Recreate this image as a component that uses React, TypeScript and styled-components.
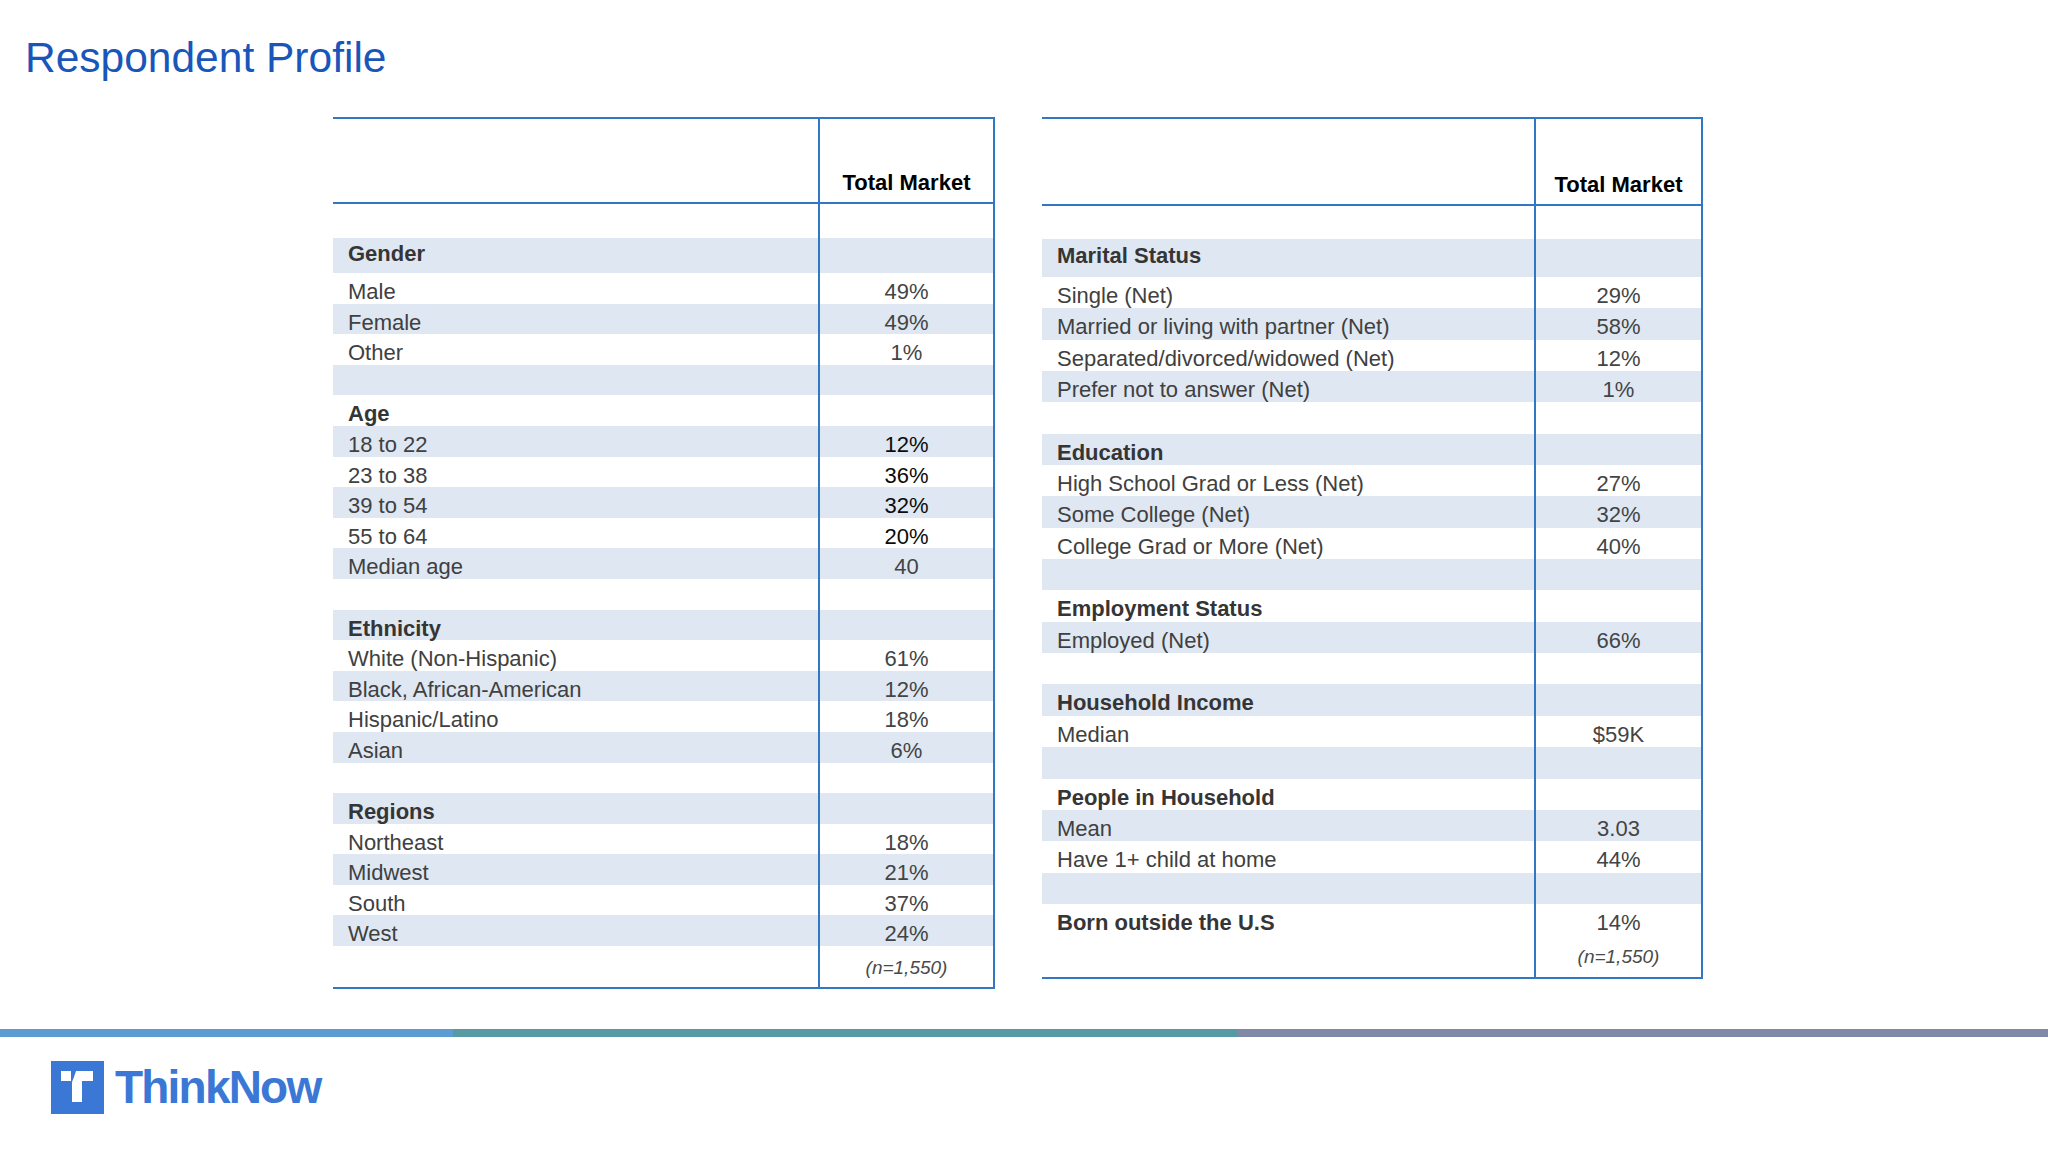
import React from 'react';
import styled, { createGlobalStyle } from 'styled-components';

const LINE = '#3177c4';
const SHADE = '#dee7f2';

const GlobalStyle = createGlobalStyle`
  html, body { margin: 0; padding: 0; background: #ffffff; }
  body { font-family: "Liberation Sans", Arial, Helvetica, sans-serif; }
  * { box-sizing: border-box; }
`;

const Page = styled.div`
  width: 2048px;
  height: 1152px;
  display: flex;
  flex-direction: column;
  background: #ffffff;
  overflow: hidden;
`;

const TitleBar = styled.header`
  height: 117px;
  padding: 36px 0 0 25px;
`;

const Title = styled.h1`
  margin: 0;
  font-size: 42.5px;
  line-height: 43px;
  font-weight: 400;
  color: #1a56ba;
`;

const Tables = styled.main`
  height: 912px;
  display: flex;
  align-items: flex-start;
  gap: 47px;
  padding-left: 333px;
`;

const Table = styled.div<{ $w: number }>`
  width: ${(p) => p.$w}px;
  display: flex;
  flex-direction: column;
  border-top: 2px solid ${LINE};
  border-bottom: 2px solid ${LINE};
  border-right: 2px solid ${LINE};
`;

const Row = styled.div<{ $label: number; $h: number; $shade?: boolean; $rule?: boolean }>`
  display: grid;
  grid-template-columns: ${(p) => p.$label}px 1fr;
  height: ${(p) => p.$h}px;
  background: ${(p) => (p.$shade ? SHADE : 'transparent')};
  border-bottom: ${(p) => (p.$rule ? `2px solid ${LINE}` : 'none')};
`;

const Label = styled.div<{ $bold?: boolean; $lift?: boolean }>`
  display: flex;
  align-items: center;
  padding-left: 15px;
  padding-top: ${(p) => (p.$lift ? '0' : '6px')};
  padding-bottom: ${(p) => (p.$lift ? '4px' : '0')};
  font-size: 22px;
  font-weight: ${(p) => (p.$bold ? 700 : 400)};
  color: ${(p) => (p.$bold ? '#353535' : '#404040')};
  white-space: nowrap;
`;

const Value = styled.div<{ $dark?: boolean; $italic?: boolean; $head?: boolean }>`
  display: flex;
  align-items: ${(p) => (p.$head ? 'flex-end' : 'center')};
  justify-content: center;
  padding-bottom: ${(p) => (p.$head ? '8px' : '0')};
  padding-top: ${(p) => (p.$head ? '0' : p.$italic ? '2px' : '6px')};
  border-left: 2px solid ${LINE};
  font-size: ${(p) => (p.$italic ? '19px' : '22px')};
  line-height: 22px;
  font-style: ${(p) => (p.$italic ? 'italic' : 'normal')};
  font-weight: ${(p) => (p.$head ? 700 : 400)};
  color: ${(p) => (p.$head ? '#000000' : p.$dark ? '#0c0c0c' : p.$italic ? '#4a4a4a' : '#444444')};
  white-space: nowrap;
`;

const Stripe = styled.div`
  height: 8px;
  display: flex;
`;

const StripeSeg = styled.div<{ $w: number; $c: string }>`
  width: ${(p) => p.$w}px;
  background: ${(p) => p.$c};
`;

const Footer = styled.footer`
  flex: 1;
  padding: 24px 0 0 51px;
`;

const Logo = styled.div`
  display: flex;
  align-items: center;
  gap: 11px;
  height: 53px;
`;

const LogoText = styled.span`
  font-size: 46px;
  line-height: 53px;
  font-weight: 700;
  letter-spacing: -1.8px;
  color: #3b77d5;
`;

type Kind = 'head' | 'item' | 'blank';
type Line = { kind: Kind; label?: string; value?: string; dark?: boolean };

const leftRows: Line[] = [
  { kind: 'item', label: 'Male', value: '49%' },
  { kind: 'item', label: 'Female', value: '49%' },
  { kind: 'item', label: 'Other', value: '1%' },
  { kind: 'blank' },
  { kind: 'head', label: 'Age' },
  { kind: 'item', label: '18 to 22', value: '12%', dark: true },
  { kind: 'item', label: '23 to 38', value: '36%', dark: true },
  { kind: 'item', label: '39 to 54', value: '32%', dark: true },
  { kind: 'item', label: '55 to 64', value: '20%', dark: true },
  { kind: 'item', label: 'Median age', value: '40' },
  { kind: 'blank' },
  { kind: 'head', label: 'Ethnicity' },
  { kind: 'item', label: 'White (Non-Hispanic)', value: '61%' },
  { kind: 'item', label: 'Black, African-American', value: '12%' },
  { kind: 'item', label: 'Hispanic/Latino', value: '18%' },
  { kind: 'item', label: 'Asian', value: '6%' },
  { kind: 'blank' },
  { kind: 'head', label: 'Regions' },
  { kind: 'item', label: 'Northeast', value: '18%' },
  { kind: 'item', label: 'Midwest', value: '21%' },
  { kind: 'item', label: 'South', value: '37%' },
  { kind: 'item', label: 'West', value: '24%' },
];

const rightRows: Line[] = [
  { kind: 'item', label: 'Single (Net)', value: '29%' },
  { kind: 'item', label: 'Married or living with partner (Net)', value: '58%' },
  { kind: 'item', label: 'Separated/divorced/widowed (Net)', value: '12%' },
  { kind: 'item', label: 'Prefer not to answer (Net)', value: '1%' },
  { kind: 'blank' },
  { kind: 'head', label: 'Education' },
  { kind: 'item', label: 'High School Grad or Less (Net)', value: '27%' },
  { kind: 'item', label: 'Some College (Net)', value: '32%' },
  { kind: 'item', label: 'College Grad or More (Net)', value: '40%' },
  { kind: 'blank' },
  { kind: 'head', label: 'Employment Status' },
  { kind: 'item', label: 'Employed (Net)', value: '66%' },
  { kind: 'blank' },
  { kind: 'head', label: 'Household Income' },
  { kind: 'item', label: 'Median', value: '$59K' },
  { kind: 'blank' },
  { kind: 'head', label: 'People in Household' },
  { kind: 'item', label: 'Mean', value: '3.03' },
  { kind: 'item', label: 'Have 1+ child at home', value: '44%' },
  { kind: 'blank' },
  { kind: 'head', label: 'Born outside the U.S', value: '14%' },
];

type TableSpec = {
  width: number;
  labelW: number;
  headerH: number;
  spacerH: number;
  firstHead: string;
  firstH: number;
  rowH: number;
  footH: number;
  rows: Line[];
};

const DataTable: React.FC<{ spec: TableSpec }> = ({ spec }) => (
  <Table $w={spec.width}>
    <Row $label={spec.labelW} $h={spec.headerH} $rule>
      <Label />
      <Value $head>Total Market</Value>
    </Row>
    <Row $label={spec.labelW} $h={spec.spacerH}>
      <Label />
      <Value />
    </Row>
    <Row $label={spec.labelW} $h={spec.firstH} $shade>
      <Label $bold $lift>
        {spec.firstHead}
      </Label>
      <Value />
    </Row>
    {spec.rows.map((r, i) => (
      <Row key={i} $label={spec.labelW} $h={spec.rowH} $shade={i % 2 === 1}>
        <Label $bold={r.kind === 'head'}>{r.label}</Label>
        <Value $dark={r.dark}>{r.value}</Value>
      </Row>
    ))}
    <Row $label={spec.labelW} $h={spec.footH}>
      <Label />
      <Value $italic>(n=1,550)</Value>
    </Row>
  </Table>
);

const leftSpec: TableSpec = {
  width: 662,
  labelW: 485,
  headerH: 85,
  spacerH: 34,
  firstHead: 'Gender',
  firstH: 35,
  rowH: 30.6,
  footH: 41,
  rows: leftRows,
};

const rightSpec: TableSpec = {
  width: 661,
  labelW: 492,
  headerH: 87,
  spacerH: 33,
  firstHead: 'Marital Status',
  firstH: 38,
  rowH: 31.35,
  footH: 42,
  rows: rightRows,
};

const LogoMark: React.FC = () => (
  <svg width="53" height="53" viewBox="0 0 53 53" aria-hidden="true">
    <rect width="53" height="53" fill="#3b77d5" />
    <rect x="10" y="10" width="10" height="10" fill="#ffffff" />
    <polygon points="25,10 42,10 42,20 31,20 31,41 21,41 21,21 23,16" fill="#ffffff" />
  </svg>
);

export default function App() {
  return (
    <Page>
      <GlobalStyle />
      <TitleBar>
        <Title>Respondent Profile</Title>
      </TitleBar>
      <Tables>
        <DataTable spec={leftSpec} />
        <DataTable spec={rightSpec} />
      </Tables>
      <Stripe>
        <StripeSeg $w={453} $c="#5d9bd3" />
        <StripeSeg $w={785} $c="#579aa3" />
        <StripeSeg $w={810} $c="#8089a8" />
      </Stripe>
      <Footer>
        <Logo>
          <LogoMark />
          <LogoText>ThinkNow</LogoText>
        </Logo>
      </Footer>
    </Page>
  );
}
